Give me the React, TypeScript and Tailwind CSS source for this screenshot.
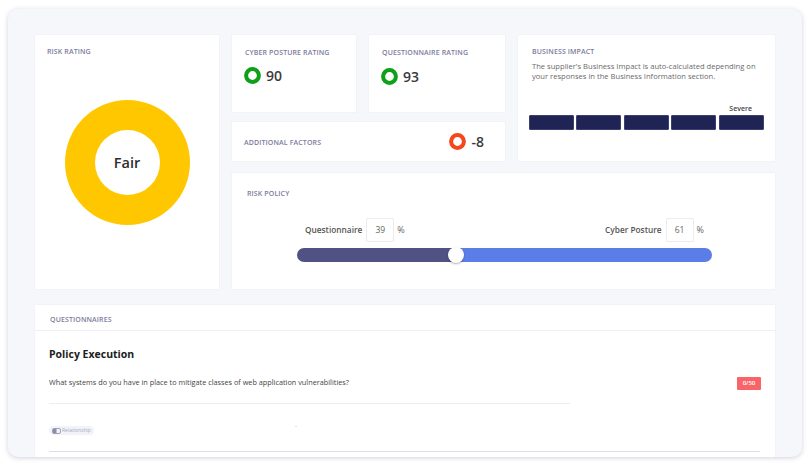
const F = "font-['Open_Sans',sans-serif]";
const CARD = "bg-white shadow-[0_0_1px_rgba(90,90,140,0.14)]";

function Label({ children }: { children: React.ReactNode }) {
  return <div className="text-[7px] leading-[11px] font-semibold tracking-[0.12px] text-[#7c7c9e] uppercase">{children}</div>;
}

function Ring({ color }: { color: string }) {
  return (
    <svg width="17" height="17" viewBox="0 0 17 17" className="shrink-0">
      <circle cx="8.5" cy="8.5" r="6.4" fill="none" stroke={color} strokeWidth="4" />
    </svg>
  );
}

function Score({ color, value }: { color: string; value: string }) {
  return (
    <div className="flex items-center gap-[5px]">
      <Ring color={color} />
      <span className="text-[14px] leading-[17px] font-semibold text-[#3a3a3a]">{value}</span>
    </div>
  );
}

function Percent({ label, value }: { label: string; value: string }) {
  return (
    <div className="flex items-center">
      <span className="text-[8.3px] font-semibold text-[#555] mr-[4px]">{label}</span>
      <span className="w-[28px] h-[24px] border border-[#ececf0] rounded-[2px] flex items-center justify-center text-[8.5px] text-[#666]">{value}</span>
      <span className="text-[9px] text-[#666] ml-[3px]">%</span>
    </div>
  );
}

export default function App() {
  return (
    <div className={`${F} w-[810px] h-[465px] bg-white overflow-hidden pt-[9px] pl-[8px]`}>
      <div className="w-[794px] h-[448px] bg-[#f6f7fa] rounded-[10px] shadow-[0_1px_5px_rgba(90,90,140,0.28)] overflow-hidden pt-[26px] px-[27px]">
        <div className="flex gap-[13px] h-[254px]">
          <div className={`w-[184px] ${CARD} pt-[11px] pl-[12px]`}>
            <Label>Risk Rating</Label>
            <div className="flex justify-center mt-[43px] -ml-[12px]">
              <div className="w-[125px] h-[125px] rounded-full bg-[#ffc700] flex items-center justify-center">
                <div className="w-[65px] h-[65px] rounded-full bg-white flex items-center justify-center text-[14.5px] font-semibold text-[#2c2c2c]">Fair</div>
              </div>
            </div>
          </div>

          <div className="w-[543px] flex flex-col gap-[12px]">
            <div className="flex gap-[13px] h-[126px]">
              <div className="w-[273px] flex flex-col gap-[10px]">
                <div className="flex gap-[13px] h-[77px]">
                  <div className={`w-[124px] ${CARD} pt-[12px] pl-[13px]`}>
                    <Label>Cyber Posture Rating</Label>
                    <div className="mt-[9px] -ml-px"><Score color="#0fa01a" value="90" /></div>
                  </div>
                  <div className={`w-[136px] ${CARD} pt-[12px] pl-[13px]`}>
                    <Label>Questionnaire Rating</Label>
                    <div className="mt-[10px] -ml-px"><Score color="#0fa01a" value="93" /></div>
                  </div>
                </div>
                <div className={`h-[39px] ${CARD} flex items-center justify-between pl-[12px] pr-[21px]`}>
                  <div className="pt-px"><Label>Additional Factors</Label></div>
                  <Score color="#f4481c" value="-8" />
                </div>
              </div>
              <div className={`w-[257px] ${CARD} pt-[11px] pl-[14px] pr-[11px]`}>
                <Label>Business Impact</Label>
                <p className="text-[7.6px] leading-[10px] text-[#6a6a6a] mt-[4px]">The supplier's Business Impact is auto-calculated depending on your responses in the Business Information section.</p>
                <div className="-ml-[3px] mt-[22px]">
                  <div className="flex justify-end pr-[12px] text-[7px] leading-[11px] font-semibold text-[#444]">Severe</div>
                  <div className="flex gap-[2.4px] mt-[1px]">
                    {[0, 1, 2, 3, 4].map((i) => (
                      <div key={i} className="w-[45px] h-[15px] bg-[#202455] rounded-[1px] border border-[#3c4070]" />
                    ))}
                  </div>
                </div>
              </div>
            </div>

            <div className={`h-[116px] ${CARD} pt-[15px] px-[15px]`}>
              <Label>Risk Policy</Label>
              <div className="flex justify-between mt-[19px] pl-[58px] pr-[56px]">
                <Percent label="Questionnaire" value="39" />
                <Percent label="Cyber Posture" value="61" />
              </div>
              <div className="relative flex h-[14px] ml-[50px] mr-[48px] mt-[6px] rounded-full overflow-visible">
                <div className="w-[159px] bg-[#505283] rounded-l-full" />
                <div className="flex-1 bg-[#5b7de8] rounded-r-full" />
                <div className="absolute left-[151px] -top-px w-[16px] h-[16px] rounded-full bg-white shadow-[0_1px_2px_rgba(0,0,0,0.3)]" />
              </div>
            </div>
          </div>
        </div>

        <div className={`mt-[16px] w-[740px] h-[160px] ${CARD}`}>
          <div className="h-[26px] border-b border-[#eeeef3] pl-[15px] pt-[4px] flex items-center">
            <Label>Questionnaires</Label>
          </div>
          <div className="pl-[14px] pr-[14px]">
            <div className="text-[10.5px] leading-[15px] font-bold text-[#1c1c1c] mt-[16px]">Policy Execution</div>
            <div className="flex justify-between items-start mt-[15px]">
              <span className="text-[7.3px] leading-[11px] text-[#444]">What systems do you have in place to mitigate classes of web application vulnerabilities?</span>
              <span className="w-[24px] h-[13px] bg-[#f9646a] rounded-[1px] text-[6px] font-semibold text-white flex items-center justify-center">0/50</span>
            </div>
            <div className="w-[521px] h-px bg-[#ececf1] mt-[13px]" />
            <div className="flex items-center mt-[22px] relative">
              <span className="h-[9px] px-[3px] rounded-full bg-[#f2f3f8] flex items-center gap-[1px] text-[5px] text-[#a9a9c2]">
                <svg width="9" height="6" viewBox="0 0 9 6"><rect x="0.5" y="0.5" width="8" height="5" rx="1.5" fill="none" stroke="#8c8cab" strokeWidth="0.8" /><rect x="1" y="1" width="3.5" height="4" fill="#8c8cab" /></svg>
                Relationship
              </span>
              <span className="absolute left-[246px] -top-[3px] text-[6px] leading-[6px] text-[#999]">-</span>
            </div>
            <div className="h-px bg-[#dedeea] mt-[16px] w-[711px]" />
          </div>
        </div>
      </div>
    </div>
  );
}
